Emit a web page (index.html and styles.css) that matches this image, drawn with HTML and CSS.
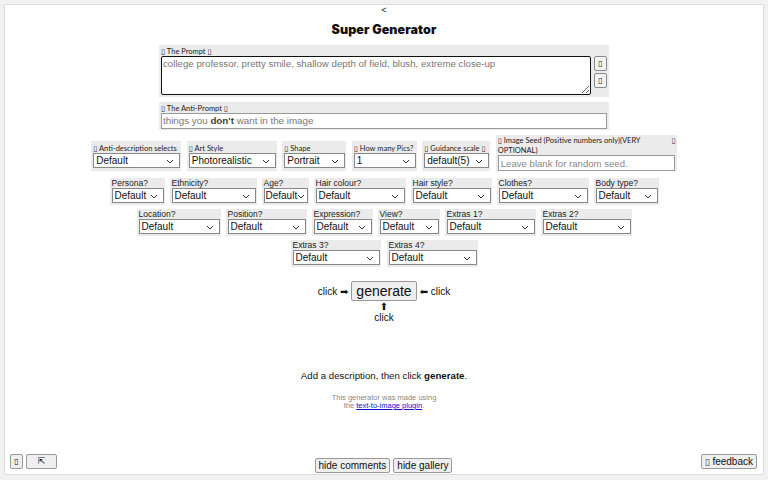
FILE: index.html
```html
<!DOCTYPE html>
<html>
<head>
<meta charset="utf-8">
<link rel="stylesheet" href="styles.css">
</head>
<body>
<div class="frame">
  <div class="back">&lt;</div>
  <h1 class="title">Super Generator</h1>

  <div class="prompt-box">
    <div class="prompt-main">
      <div class="lbl-fancy"><span class="tofu">▯</span> The Prompt <span class="tofu">▯</span></div>
      <textarea class="prompt-ta" placeholder="college professor, pretty smile, shallow depth of field, blush, extreme close-up"></textarea>
    </div>
    <div class="side-btns">
      <button class="side-btn">▯</button>
      <button class="side-btn">▯</button>
    </div>
  </div>

  <div class="anti-box">
    <div class="lbl-fancy"><span class="tofu">▯</span> The Anti-Prompt <span class="tofu">▯</span></div>
    <div class="fake-input">things you <b>don't</b> want in the image</div>
  </div>

  <div class="row row1">
    <div class="f"><div class="lbl-fancy"><span class="tofu">▯</span> Anti-description selects</div><select class="w87"><option>Default</option></select></div>
    <div class="f"><div class="lbl-fancy"><span class="tofu">▯</span> Art Style</div><select class="w87"><option>Photorealistic</option></select></div>
    <div class="f"><div class="lbl-fancy"><span class="tofu">▯</span> Shape</div><select class="w61"><option>Portrait</option></select></div>
    <div class="f"><div class="lbl-fancy"><span class="tofu">▯</span> How many Pics?</div><select class="w62"><option>1</option></select></div>
    <div class="f"><div class="lbl-fancy"><span class="tofu">▯</span> Guidance scale <span class="tofu">▯</span></div><select class="w65"><option>default(5)</option></select></div>
    <div class="f seed">
      <div class="lbl-fancy seed-lbl"><span class="seed-txt"><span class="tofu">▯</span> Image Seed (Positive numbers only)(VERY<br>OPTIONAL)</span><span class="tofu seed-end">▯</span></div>
      <input class="seed-in" placeholder="Leave blank for random seed.">
    </div>
  </div>

  <div class="row row2">
    <div class="f"><div class="lbl">Persona?</div><select class="w52"><option>Default</option></select></div>
    <div class="f"><div class="lbl">Ethnicity?</div><select class="w84"><option>Default</option></select></div>
    <div class="f"><div class="lbl">Age?</div><select class="w44"><option>Default</option></select></div>
    <div class="f"><div class="lbl">Hair colour?</div><select class="w89"><option>Default</option></select></div>
    <div class="f"><div class="lbl">Hair style?</div><select class="w78"><option>Default</option></select></div>
    <div class="f"><div class="lbl">Clothes?</div><select class="w89"><option>Default</option></select></div>
    <div class="f"><div class="lbl">Body type?</div><select class="w62"><option>Default</option></select></div>
  </div>

  <div class="row row3">
    <div class="f"><div class="lbl">Location?</div><select class="w81"><option>Default</option></select></div>
    <div class="f"><div class="lbl">Position?</div><select class="w78"><option>Default</option></select></div>
    <div class="f"><div class="lbl">Expression?</div><select class="w58"><option>Default</option></select></div>
    <div class="f"><div class="lbl">View?</div><select class="w59"><option>Default</option></select></div>
    <div class="f"><div class="lbl">Extras 1?</div><select class="w88"><option>Default</option></select></div>
    <div class="f"><div class="lbl">Extras 2?</div><select class="w88"><option>Default</option></select></div>
  </div>

  <div class="row row4">
    <div class="f"><div class="lbl">Extras 3?</div><select class="w87"><option>Default</option></select></div>
    <div class="f"><div class="lbl">Extras 4?</div><select class="w88"><option>Default</option></select></div>
  </div>

  <div class="gen">
    <div class="gen-line">
      <span>click <span class="arr">➡</span></span>
      <button class="gen-btn">generate</button>
      <span><span class="arr">⬅</span> click</span>
    </div>
    <div class="arr up">⬆</div>
    <div class="gen-below">click</div>
  </div>

  <div class="msg">Add a description, then click <b>generate</b>.</div>
  <div class="credit">This generator was made using<br>the <a href="#">text-to-image plugin</a>.</div>

  <div class="footer">
    <div class="foot-left">
      <button class="fbtn sq">▯</button>
      <button class="fbtn wide">⇱</button>
    </div>
    <div class="foot-mid">
      <button class="fbtn">hide comments</button>
      <button class="fbtn">hide gallery</button>
    </div>
    <div class="foot-right">
      <button class="fbtn"><span class="tofu">▯</span> feedback</button>
    </div>
  </div>
</div>
</body>
</html>
```

FILE: styles.css
```css
* { box-sizing: border-box; }
html, body { margin: 0; padding: 0; }
body {
  background: #f1f1f1;
  font-family: "Liberation Sans", Arial, sans-serif;
  color: #111;
}
.frame {
  margin: 4px;
  height: 471px;
  background: #fff;
  border: 1px solid #dcdcdc;
  display: flex;
  flex-direction: column;
  align-items: center;
}
.tofu {
  font-family: "DejaVu Sans", sans-serif;
  font-weight: normal;
  color: #333;
}
.back {
  font-size: 9px;
  line-height: 9px;
  margin-top: 1px;
  color: #222;
}
.title {
  font-family: Inter, "DejaVu Sans", sans-serif;
  font-weight: 900;
  font-size: 12.5px;
  line-height: 16px;
  margin: 7px 0 0;
  letter-spacing: 0.1px;
}
.lbl-fancy {
  font-family: Lato, "DejaVu Sans", sans-serif;
  font-size: 7.5px;
  line-height: 9px;
  color: #222;
  text-align: left;
  white-space: nowrap;
}
.prompt-box {
  margin-top: 7px;
  width: 450px;
  background: #ebebeb;
  padding: 2px 2px 2px 2px;
  display: flex;
  align-items: flex-start;
}
.prompt-main { flex: 1; display: flex; flex-direction: column; }
.prompt-ta {
  width: 430px;
  height: 39px;
  margin: 0;
  border: 1px solid #111;
  border-radius: 2px;
  font-family: "Liberation Sans", Arial, sans-serif;
  font-size: 9.7px;
  line-height: 11px;
  padding: 1px 1px;
  resize: vertical;
  background: #fff;
}
.prompt-ta::placeholder { color: #777; }
.side-btns {
  display: flex;
  flex-direction: column;
  gap: 2px;
  margin-left: 2px;
  margin-top: 9px;
}
.side-btn {
  width: 13px;
  height: 15px;
  padding: 0;
  font-size: 8px;
  line-height: 13px;
  background: #f3f3f3;
  border: 1px solid #888;
  border-radius: 2px;
  color: #222;
  font-family: "DejaVu Sans", sans-serif;
}
.anti-box {
  margin-top: 5px;
  width: 450px;
  background: #ebebeb;
  padding: 2px 2px 1px 2px;
}
.fake-input {
  height: 16px;
  border: 1px solid #999;
  background: #fff;
  font-size: 9.8px;
  line-height: 14px;
  padding: 0 1px;
  color: #777;
  text-align: left;
}
.fake-input b { color: #444; }

.row {
  display: flex;
  justify-content: center;
  align-items: flex-end;
  gap: 5.5px;
}
.row1 { margin-top: 5px; }
.row2 { margin-top: 7px; gap: 5px; }
.row3 { margin-top: 4px; gap: 5px; }
.row4 { margin-top: 4px; gap: 6px; }

.f {
  background: #ebebeb;
  padding: 1px 1px 2px 2px;
  display: flex;
  flex-direction: column;
}
.row1 .f { padding-top: 3px; padding-bottom: 3px; }
.lbl {
  font-size: 8.5px;
  line-height: 9px;
  color: #222;
  text-align: left;
  white-space: nowrap;
}
select {
  -webkit-appearance: none;
  appearance: none;
  height: 15px;
  font-family: "Liberation Sans", Arial, sans-serif;
  font-size: 10px;
  line-height: 13px;
  color: #111;
  border: 1px solid #888;
  border-radius: 0;
  background-color: #fff;
  background-image:
    linear-gradient(45deg, transparent calc(50% - 0.6px), #333 calc(50% - 0.6px), #333 calc(50% + 0.6px), transparent calc(50% + 0.6px)),
    linear-gradient(135deg, transparent calc(50% - 0.6px), #333 calc(50% - 0.6px), #333 calc(50% + 0.6px), transparent calc(50% + 0.6px));
  background-size: 3px 3px, 3px 3px;
  background-position: calc(100% - 9px) 6px, calc(100% - 6px) 6px;
  background-repeat: no-repeat;
  padding: 0 11px 0 2px;
  margin: 0;
}
.w44 { width: 44px; padding-right: 7px; padding-left: 1px; background-position: calc(100% - 6px) 6px, calc(100% - 3px) 6px; }
.w52 { width: 52px; }
.w58 { width: 58px; }
.w59 { width: 59px; }
.w61 { width: 61px; }
.w62 { width: 62px; }
.w65 { width: 65px; }
.w78 { width: 78px; }
.w81 { width: 81px; }
.w84 { width: 84px; }
.w87 { width: 87px; }
.w88 { width: 88px; }
.w89 { width: 89px; }

.seed { width: 181px; }
.row1 .seed { padding-bottom: 0; padding-top: 1px; }
.seed-lbl {
  display: flex;
  justify-content: space-between;
  white-space: nowrap;
  font-size: 7.5px;
  line-height: 9.5px;
  margin-bottom: 0;
}
.seed-txt { flex: 1; min-width: 0; }
.seed-end { margin-left: 2px; }
.seed-in {
  width: 177px;
  height: 16px;
  border: 1px solid #999;
  font-family: "Liberation Sans", Arial, sans-serif;
  font-size: 9.6px;
  padding: 0 2px;
  margin: 0;
  background: #fff;
}
.seed-in::placeholder { color: #888; }

.gen {
  margin-top: 14px;
  display: flex;
  flex-direction: column;
  align-items: center;
  font-size: 10px;
  color: #111;
}
.gen-line {
  display: flex;
  align-items: center;
  gap: 3px;
}
.arr { font-family: "DejaVu Sans", sans-serif; font-size: 10px; }
.gen-btn {
  height: 20px;
  padding: 0 4px;
  font-family: "Liberation Sans", Arial, sans-serif;
  font-size: 14px;
  line-height: 18px;
  background: #efefef;
  border: 1px solid #999;
  border-radius: 2px;
  color: #111;
}
.up { line-height: 10px; margin-top: 1px; font-size: 10px; }
.gen-below { line-height: 11px; }

.msg {
  margin-top: 47px;
  font-size: 9.7px;
  line-height: 12px;
}
.credit {
  margin-top: 12px;
  font-size: 7.5px;
  line-height: 8px;
  color: #888;
  text-align: center;
}
.credit a { color: #1111cc; }

.footer {
  margin-top: auto;
  width: 100%;
  display: grid;
  grid-template-columns: 1fr auto 1fr;
  align-items: end;
  padding: 0 6px 1px 5px;
}
.foot-left { display: flex; gap: 3px; padding-bottom: 4px; }
.foot-mid { display: flex; gap: 3px; }
.foot-right { display: flex; justify-content: flex-end; padding-bottom: 4px; }
.fbtn {
  height: 15px;
  padding: 0 3px;
  font-family: "Liberation Sans", Arial, sans-serif;
  font-size: 10px;
  line-height: 13px;
  background: #efefef;
  border: 1px solid #999;
  border-radius: 2px;
  color: #111;
}
.fbtn.sq { width: 13px; padding: 0; font-family: "DejaVu Sans", sans-serif; font-size: 8px; }
.fbtn.wide { width: 31px; font-family: "DejaVu Sans", sans-serif; font-size: 9px; }
.fbtn .tofu { font-size: 9px; }
```
